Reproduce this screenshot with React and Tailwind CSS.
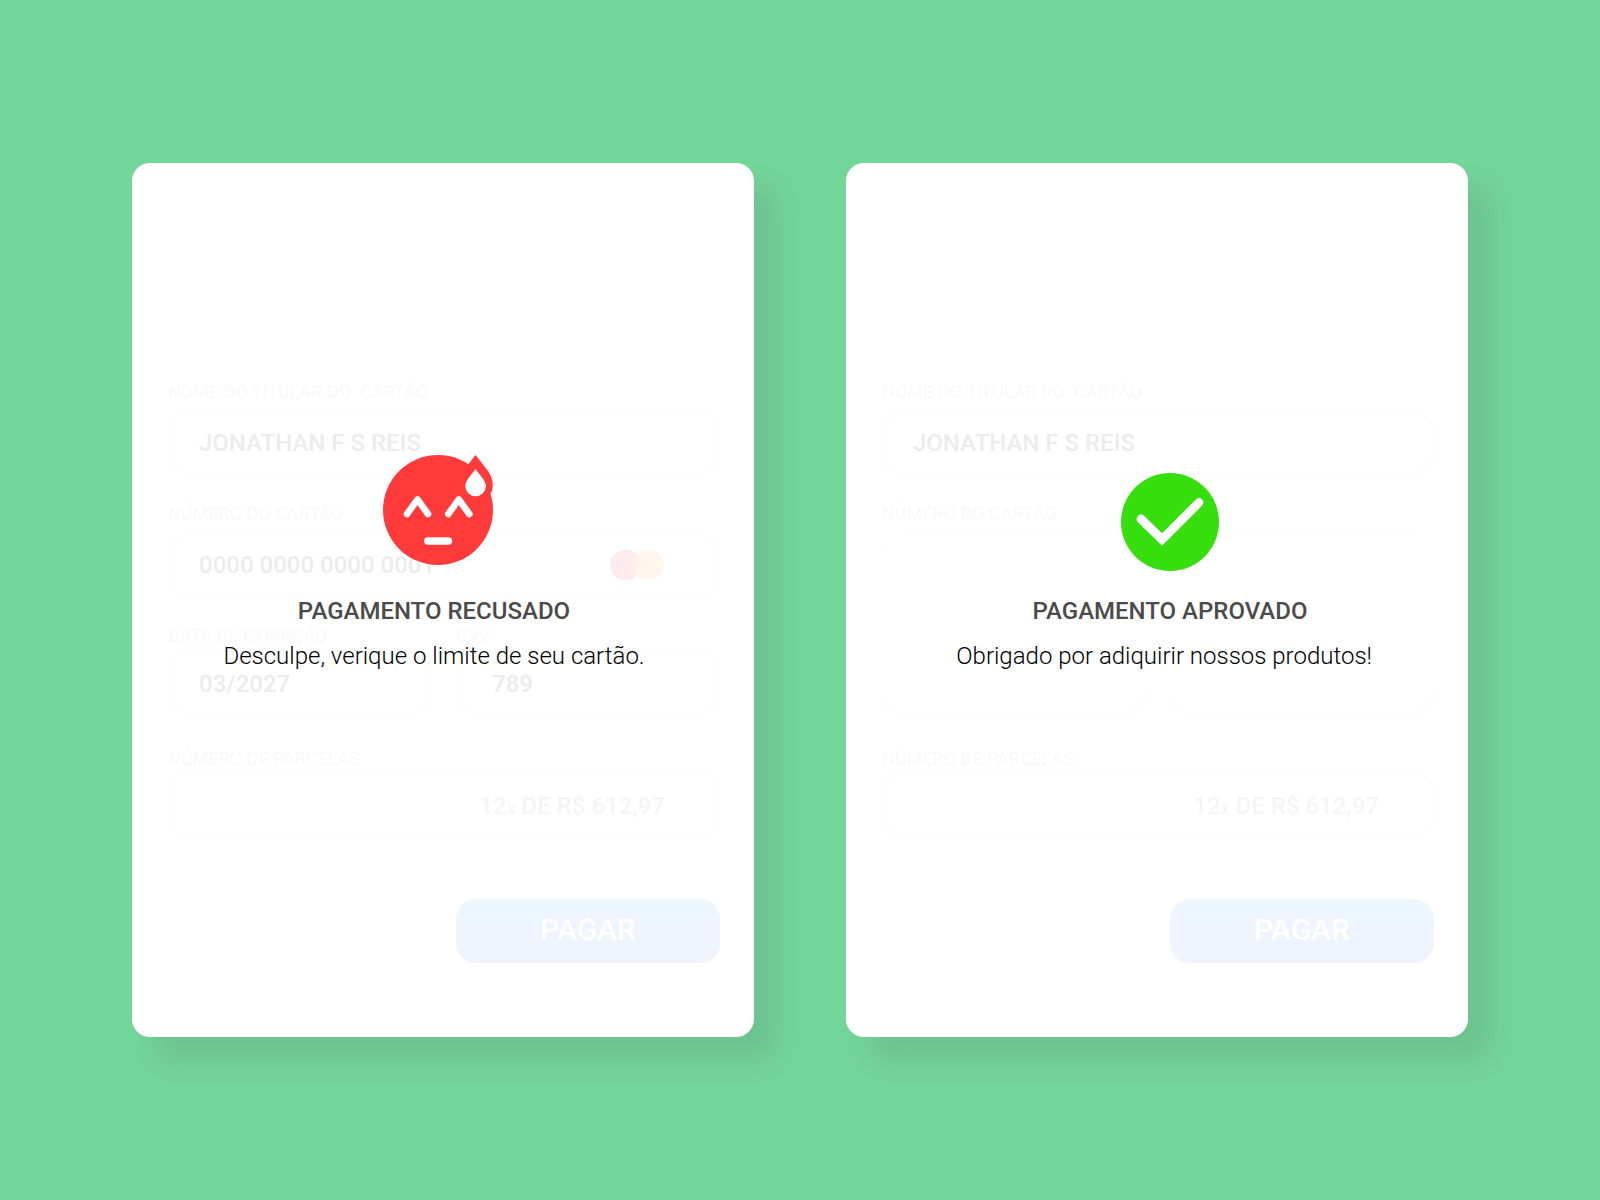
const inputClass =
  'w-full rounded-[20px] border-2 border-[#fbfdfe] bg-transparent pl-[29px] text-2xl font-medium text-[#ececec] outline-none'

function Field({ id, label, className, children }) {
  return (
    <div className={`flex flex-col ${className}`}>
      <label htmlFor={id} className="h-[26px] whitespace-pre text-lg leading-[26px] text-[#f9f9f9]">
        {label}
      </label>
      {children}
    </div>
  )
}

function CardBrand() {
  return (
    <svg width="54" height="32" viewBox="0 0 54 32" className="absolute top-[15px] right-14">
      <circle cx="15.5" cy="16" r="15.5" fill="#ffebed" />
      <circle cx="38.5" cy="16" r="15.5" fill="#fff7eb" />
      <path d="M27 5.6a15.500 15.500 0 0 1 0 20.800a15.500 15.500 0 0 1 0-20.800z" fill="#fff2e8" />
    </svg>
  )
}

function PaymentForm({ prefix, number, expiry, cvv, covered }) {
  return (
    <form className="flex flex-col pt-[216px] pr-[34px] pb-[74px] pl-9" onSubmit={(e) => e.preventDefault()}>
      <Field id={`${prefix}-name`} label="NOME DO TITULAR DO  CARTÃO" className="gap-[7px]">
        <input id={`${prefix}-name`} className={`${inputClass} h-[62px]`} defaultValue="JONATHAN F S REIS" />
      </Field>

      <Field id={`${prefix}-number`} label="NÚMERO DO CARTÃO" className="mt-[27px] gap-[7px]">
        <div className="relative">
          <input
            id={`${prefix}-number`}
            className={`${inputClass} block h-[62px] ${covered ? 'opacity-30' : ''}`}
            defaultValue={number}
          />
          {!covered && <CardBrand />}
        </div>
      </Field>

      <div className="mt-[27px] grid grid-cols-2 gap-6">
        <Field id={`${prefix}-expiry`} label={!covered && 'DATA DE EXPIRÇÃO'} className="gap-px">
          <input
            id={`${prefix}-expiry`}
            aria-label="Data de expiração"
            className={`${inputClass} h-16 pt-[3px]`}
            defaultValue={expiry}
          />
        </Field>
        <Field id={`${prefix}-cvv`} label={!covered && 'CVV'} className="gap-px">
          <input
            id={`${prefix}-cvv`}
            aria-label="CVV"
            className={`${inputClass} h-16 pt-[3px] pl-[34px]`}
            defaultValue={cvv}
          />
        </Field>
      </div>

      <Field id={`${prefix}-parcels`} label="NÚMERO DE PARCELAS" className="mt-8">
        <button
          id={`${prefix}-parcels`}
          type="button"
          className="h-16 w-full rounded-[20px] border-2 border-[#fbfdfe] pt-[3px] pr-[53px] text-right text-2xl font-medium text-[#f5f5f5]"
        >
          12<span className="text-lg font-normal">x</span> DE R$ 612,97
        </button>
      </Field>

      <button
        type="submit"
        className="mt-[63px] h-16 w-[264px] self-end rounded-[20px] bg-linear-to-b from-[#edf7ff] to-[#f0f3fd] pb-[3px] text-3xl font-medium text-white"
      >
        PAGAR
      </button>
    </form>
  )
}

function SadFace() {
  return (
    <svg width="118" height="110" viewBox="-8 0 118 110">
      <circle cx="55" cy="55" r="55" fill="#ff3a3a" />
      <path d="M84 11L92.500 0L105 16C109 22 112 30 107.500 39L96 44L82 38Z" fill="#ff3a3a" />
      <path d="M92.500 14C89 19 82.300 25.500 82.300 31a10.300 10.300 0 0 0 20.600 0C102.900 25.500 96 19 92.500 14Z" fill="#fff" />
      <g fill="none" stroke="#fff" strokeWidth="6.600" strokeLinecap="round" strokeLinejoin="round">
        <path d="M24 59L34.500 44.500L45 59" />
        <path d="M65.300 59L75.800 44.500L86.300 59" />
      </g>
      <path d="M44.800 86H65.500" stroke="#fff" strokeWidth="7.400" strokeLinecap="round" />
    </svg>
  )
}

function CheckMark() {
  return (
    <svg width="98" height="98" viewBox="0 0 98 98">
      <circle cx="49" cy="49" r="49" fill="#35de0c" />
      <path d="M20 46L41 66.500L78 29.500" fill="none" stroke="#fff" strokeWidth="8.800" strokeLinecap="round" />
    </svg>
  )
}

function Status({ icon, title, message, className }) {
  return (
    <div className={`pointer-events-none absolute inset-0 flex flex-col items-center ${className}`}>
      {icon}
      <div className="flex flex-col items-center gap-[13px]">
        <h2 className="text-2xl font-medium text-[#4d4a4a]">{title}</h2>
        <p className="whitespace-pre text-2xl font-light text-black">{message}</p>
      </div>
    </div>
  )
}

function PaymentCard({ children }) {
  return (
    <section className="relative flex-1 rounded-[18px] bg-white shadow-[23px_23px_26px_rgba(70,70,70,0.13)]">
      {children}
    </section>
  )
}

export default function App() {
  return (
    <main className="flex min-h-screen items-center bg-[#73d699] px-[132px] font-['Roboto',sans-serif]">
      <div className="flex w-full gap-[92px]">
        <PaymentCard>
          <PaymentForm prefix="refused" number="0000 0000 0000 0001" expiry="03/2027" cvv="789" />
          <Status
            icon={<SadFace />}
            title="PAGAMENTO RECUSADO"
            message="Desculpe, verique o limite de seu cartão."
            className="gap-[30px] pt-[292px] pr-[18px]"
          />
        </PaymentCard>

        <PaymentCard>
          <PaymentForm prefix="approved" covered />
          {/* hides the middle of the form behind the message */}
          <div className="absolute inset-x-0 top-[388px] h-[141px] bg-white"></div>
          <Status
            icon={<CheckMark />}
            title="PAGAMENTO APROVADO"
            message="Obrigado por adiquirir nossos produtos!  "
            className="gap-6 pt-[310px] pl-[26px]"
          />
        </PaymentCard>
      </div>
    </main>
  )
}
